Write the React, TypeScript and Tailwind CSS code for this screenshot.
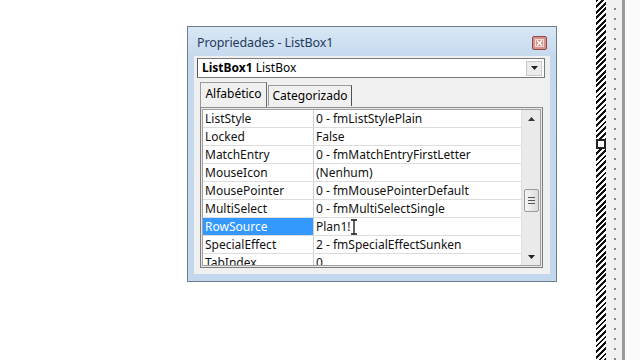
import React from "react";

const rows: [string, string][] = [
  ["ListStyle", "0 - fmListStylePlain"],
  ["Locked", "False"],
  ["MatchEntry", "0 - fmMatchEntryFirstLetter"],
  ["MouseIcon", "(Nenhum)"],
  ["MousePointer", "0 - fmMousePointerDefault"],
  ["MultiSelect", "0 - fmMultiSelectSingle"],
  ["RowSource", "Plan1!"],
  ["SpecialEffect", "2 - fmSpecialEffectSunken"],
  ["TabIndex", "0"],
];

function Triangle({ up }: { up?: boolean }) {
  return (
    <svg width="7" height="4" viewBox="0 0 7 4">
      {up ? <polygon points="0,4 7,4 3.5,0" fill="#333" /> : <polygon points="0,0 7,0 3.5,4" fill="#222" />}
    </svg>
  );
}

export default function App() {
  return (
    <div
      className="w-[640px] h-[360px] bg-white flex overflow-hidden"
      style={{ fontFamily: '"Noto Sans", "Open Sans", sans-serif' }}
    >
      <div className="w-[187px] shrink-0" />
      <div className="pt-[26px] shrink-0">
        {/* window */}
        <div className="w-[370px] h-[256px] border border-[#6f7f90] bg-[linear-gradient(#d9e7f5,#c5d9ee_30px,#c3d7ed)] flex flex-col px-[6px] pb-[7px]">
          <div className="h-[29px] flex items-center justify-between pl-[3px] pr-[3px] shrink-0">
            <span className="text-[12.5px] text-[#1e3a5c] tracking-[-0.1px] pt-[3px]">Propriedades - ListBox1</span>
            <div className="w-[15px] h-[14px] mt-[3px] rounded-[2px] border border-[#8c4a46] bg-[#d7928c] flex items-center justify-center">
              <div className="w-[9px] h-[8px] border border-[#f3d9d6] flex items-center justify-center">
                <svg width="7" height="6" viewBox="0 0 7 6">
                  <path d="M1 0.5 L6 5.5 M6 0.5 L1 5.5" stroke="#fff" strokeWidth="1.4" />
                </svg>
              </div>
            </div>
          </div>
          <div className="flex-1 bg-[#f0f0f0] flex flex-col pl-[3px] pr-[5px] pt-[2px]">
            {/* combobox */}
            <div className="h-[20px] border border-[#7a7a7a] border-l-[#5a5a5a] bg-white flex items-center pl-[4px] pr-[2px]">
              <span className="text-[12px] text-black leading-none flex-1">
                <b className="font-bold">ListBox1</b> ListBox
              </span>
              <div className="w-[16px] h-[15px] bg-[#ececec] border border-[#c8c8c8] flex items-center justify-center">
                <Triangle />
              </div>
            </div>
            {/* tabs */}
            <div className="flex items-end pl-[3px] mt-[3px] h-[26px]">
              <div className="h-[25px] w-[67px] bg-[#f0f0f0] border border-b-0 border-[#9a9a9a] border-r-[#6a6a6a] flex items-start pt-[2px] justify-center text-[12px] text-black">
                Alfabético
              </div>
              <div className="h-[21px] w-[84px] ml-[1px] border border-b-0 border-[#9a9a9a] border-r-[#505050] flex items-center justify-center text-[12px] text-black mb-[1px]">
                Categorizado
              </div>
            </div>
            {/* grid */}
            <div className="ml-[3px] w-[343px] h-[161px] border border-[#7d7d7d] border-t-[#909090] p-[1px] bg-[#e8e8e8]">
              <div className="w-full h-full border border-[#a0a0a0] flex bg-white overflow-hidden">
                <div className="w-[318px] flex flex-col">
                  {rows.map(([n, v]) => {
                    const sel = n === "RowSource";
                    return (
                      <div key={n} className="h-[18px] shrink-0 flex border-b border-[#dcdcdc] text-[12px] leading-none">
                        <div
                          className={
                            "w-[111px] border-r border-[#cfcfcf] flex items-center pl-[2px] " +
                            (sel ? "bg-[#3399ff] text-white" : "text-[#111]")
                          }
                        >
                          {n}
                        </div>
                        <div className="flex-1 flex items-center pl-[2px] text-[#111]">
                          {v}
                          {sel && (
                            <svg width="8" height="16" viewBox="0 0 8 16" className="ml-[-1px]">
                              <path d="M1 1 H7 M4 1 V15 M1 15 H7" stroke="#111" strokeWidth="1.3" fill="none" />
                            </svg>
                          )}
                        </div>
                      </div>
                    );
                  })}
                </div>
                {/* scrollbar */}
                <div className="w-[19px] bg-[#eaeaea] border-l border-[#e0e0e0] flex flex-col items-center">
                  <div className="h-[17px] flex items-center justify-center">
                    <Triangle up />
                  </div>
                  <div className="h-[62px]" />
                  <div className="w-[15px] h-[23px] rounded-[2px] border border-[#9a9a9a] bg-[linear-gradient(90deg,#f4f4f4,#dcdcdc)] flex flex-col items-center justify-center gap-[2px]">
                    <div className="w-[7px] h-[1px] bg-[#555]" />
                    <div className="w-[7px] h-[1px] bg-[#555]" />
                    <div className="w-[7px] h-[1px] bg-[#555]" />
                  </div>
                  <div className="flex-1" />
                  <div className="h-[17px] flex items-center justify-center">
                    <Triangle />
                  </div>
                </div>
              </div>
            </div>
          </div>
        </div>
      </div>
      <div className="flex-1" />
      {/* right strip */}
      <div className="w-[10px] h-full shrink-0 bg-[repeating-linear-gradient(135deg,#111_0px,#111_2px,#fff_2px,#fff_4px)] flex flex-col">
        <div className="h-[139px]" />
        <div className="w-[10px] h-[10px] bg-white border-2 border-[#222]" />
      </div>
      <div className="w-[16px] h-full shrink-0 bg-[#f1f1f1] flex flex-col items-center pt-[8px] gap-[8px] pl-[1px]">
        {Array.from({ length: 40 }).map((_, i) => (
          <div key={i} className="w-[2px] h-[2px] bg-[#888] shrink-0" />
        ))}
      </div>
      <div className="w-[3px] h-full shrink-0 bg-[#9a9a9a]" />
      <div className="w-[15px] h-full shrink-0 bg-[#fbfbfb]" />
    </div>
  );
}
